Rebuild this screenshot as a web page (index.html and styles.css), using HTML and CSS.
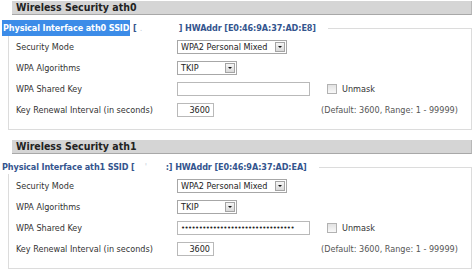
FILE: index.html
```html
<!DOCTYPE html>
<html>
<head>
<meta charset="utf-8">
<link rel="stylesheet" href="styles.css">
</head>
<body>
<div class="section">
  <div class="hdr">Wireless Security ath0</div>
  <fieldset class="box">
    <legend class="lg"><span class="sel-hl">Physical Interface ath0 SSID</span> [<span class="ssid s0">.</span>] HWAddr [E0:46:9A:37:AD:E8]</legend>
    <div class="grid">
      <div class="lbl">Security Mode</div>
      <div class="ctl"><div class="dd w110"><span class="dv">WPA2 Personal Mixed</span><span class="arr"></span></div></div>
      <div></div>
      <div class="lbl">WPA Algorithms</div>
      <div class="ctl"><div class="dd w60"><span class="dv">TKIP</span><span class="arr"></span></div></div>
      <div></div>
      <div class="lbl">WPA Shared Key</div>
      <div class="ctl"><div class="inp w133"></div></div>
      <div class="ctl"><span class="cb"></span><span class="cbl">Unmask</span></div>
      <div class="lbl">Key Renewal Interval (in seconds)</div>
      <div class="ctl"><div class="inp w37 num">3600</div></div>
      <div class="note">(Default: 3600, Range: 1 - 99999)</div>
    </div>
  </fieldset>
</div>
<div class="section">
  <div class="hdr">Wireless Security ath1</div>
  <fieldset class="box">
    <legend class="lg">Physical Interface ath1 SSID [<span class="ssid s1">'</span>:] HWAddr [E0:46:9A:37:AD:EA]</legend>
    <div class="grid">
      <div class="lbl">Security Mode</div>
      <div class="ctl"><div class="dd w110"><span class="dv">WPA2 Personal Mixed</span><span class="arr"></span></div></div>
      <div></div>
      <div class="lbl">WPA Algorithms</div>
      <div class="ctl"><div class="dd w60"><span class="dv">TKIP</span><span class="arr"></span></div></div>
      <div></div>
      <div class="lbl">WPA Shared Key</div>
      <div class="ctl"><div class="inp w133"><span class="dots">••••••••••••••••••••••••••••••••</span></div></div>
      <div class="ctl"><span class="cb"></span><span class="cbl">Unmask</span></div>
      <div class="lbl">Key Renewal Interval (in seconds)</div>
      <div class="ctl"><div class="inp w37 num">3600</div></div>
      <div class="note">(Default: 3600, Range: 1 - 99999)</div>
    </div>
  </fieldset>
</div>
</body>
</html>
```
FILE: styles.css
```css
html, body {
  margin: 0;
  padding: 0;
  background: #ffffff;
}
body {
  padding-top: 1px;
  font-family: "DejaVu Sans Condensed", "DejaVu Sans", sans-serif;
  font-stretch: condensed;
  font-size: 9px;
  color: #333333;
}
.section {
  margin-bottom: 10px;
}
.hdr {
  margin: 0 2px 0 12px;
  height: 13px;
  line-height: 13px;
  padding-left: 4px;
  background: #d5d5d5;
  border-bottom: 1px solid #a8a8a8;
  border-right: 1px solid #b8b8b8;
  font-weight: bold;
  font-size: 10.5px;
  color: #222222;
}
.box {
  margin: 6px 2px 0 8px;
  padding: 0 0 9px 0;
  border: 1px solid #dcdcdc;
  min-width: 0;
}
.lg {
  margin-left: -7px;
  padding: 0 12px 0 0;
  height: 14px;
  line-height: 14px;
  font-weight: bold;
  font-size: 9px;
  letter-spacing: -0.1px;
  color: #34558e;
}
.sel-hl {
  background: #3c8ce8;
  color: #ffffff;
  padding: 3px 1px;
}
.ssid {
  display: inline-block;
  color: #c8cfdc;
  font-weight: normal;
  padding-left: 3px;
}
.s0 { width: 39px; }
.s1 { width: 21px; padding-left: 10px; }
.grid {
  display: grid;
  grid-template-columns: 161px 144px auto;
  grid-auto-rows: 21px;
  align-items: center;
  padding: 1px 0 0 7px;
}
.lbl {
  white-space: nowrap;
}
.ctl {
  display: flex;
  align-items: center;
}
.dd {
  box-sizing: border-box;
  height: 14px;
  border: 1px solid #a7a7a7;
  background: #ffffff;
  display: flex;
  align-items: center;
  justify-content: space-between;
  padding: 0 1px 0 3px;
  color: #222222;
}
.w110 { width: 110px; }
.w60 { width: 60px; }
.w133 { width: 133px; }
.w37 { width: 37px; }
.dv {
  white-space: nowrap;
}
.arr {
  box-sizing: border-box;
  width: 10px;
  height: 10px;
  border: 1px solid #a4a4a4;
  background: linear-gradient(#f6f6f6, #d9d9d9);
  position: relative;
  flex: none;
}
.arr::after {
  content: "";
  position: absolute;
  left: 2px;
  top: 3px;
  border-left: 2px solid transparent;
  border-right: 2px solid transparent;
  border-top: 2px solid #111111;
}
.inp {
  box-sizing: border-box;
  height: 14px;
  border: 1px solid #b9b9b9;
  background: #ffffff;
  display: flex;
  align-items: center;
  padding: 0 3px;
  color: #222222;
  overflow: hidden;
}
.num {
  justify-content: flex-end;
}
.dots {
  font-family: "DejaVu Sans", sans-serif;
  font-stretch: normal;
  font-size: 7px;
  letter-spacing: -0.6px;
  color: #222222;
  white-space: nowrap;
}
.cb {
  box-sizing: border-box;
  width: 10px;
  height: 10px;
  margin-left: 6px;
  border: 1px solid #b2b2b2;
  background: linear-gradient(#e2e2e2, #f8f8f8);
}
.cbl {
  margin-left: 5px;
}
.note {
  white-space: nowrap;
  color: #555555;
}
```
